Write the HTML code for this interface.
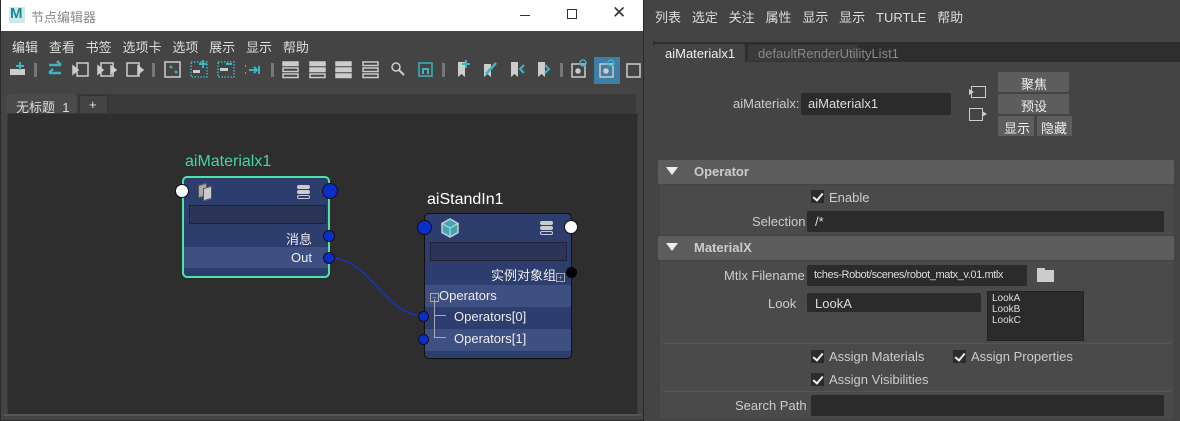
<!DOCTYPE html>
<html><head><meta charset="utf-8"><style>
*{margin:0;padding:0;box-sizing:border-box}
body{width:1180px;height:421px;overflow:hidden;background:#444;font-family:"Liberation Sans","Noto Sans CJK SC",sans-serif;font-size:13px;color:#ddd;position:relative}
.a{position:absolute}
.t{position:absolute;white-space:nowrap}
.ck{position:absolute;width:13px;height:13px;background:#2b2b2b}
.ck:after{content:"";position:absolute;left:4px;top:1px;width:4px;height:8px;border-right:2px solid #eee;border-bottom:2px solid #eee;transform:rotate(40deg)}
</style></head><body>
<!-- left window -->
<div class="a" style="left:0;top:0;width:644px;height:421px;background:#444;border:1px solid #2a2a2a"></div>
<div class="a" style="left:1px;top:0;width:642px;height:31px;background:#fff"></div>
<div class="a" style="left:9px;top:7px;width:16px;height:16px;background:#cde9ea"></div>
<div class="t" style="left:10px;top:5px;font:bold 15px 'Liberation Sans',sans-serif;color:#1a8a95">M</div>
<div class="t" style="left:31px;top:7px;font-size:13px;color:#888">节点编辑器</div>
<div class="a" style="left:520px;top:15px;width:10px;height:1px;background:#333"></div>
<div class="a" style="left:567px;top:9px;width:10px;height:10px;border:1px solid #333"></div>
<div class="t" style="left:612px;top:3px;font-size:17px;color:#333">✕</div>
<div class="t" style="left:12px;top:37px;color:#ddd">编辑&nbsp;&nbsp;&nbsp;查看&nbsp;&nbsp;&nbsp;书签&nbsp;&nbsp;&nbsp;选项卡&nbsp;&nbsp;&nbsp;选项&nbsp;&nbsp;&nbsp;展示&nbsp;&nbsp;&nbsp;显示&nbsp;&nbsp;&nbsp;帮助</div>
<!-- toolbar -->
<svg class="a" style="left:0;top:55px" width="645" height="32" viewBox="0 55 645 32">
<g fill="none" stroke="#ccc" stroke-width="1.5">
<rect x="10" y="69" width="15" height="6" fill="#ccc" stroke="none"/><path d="M20 62v8M16 66h8" stroke="#3cb4c4" stroke-width="2"/>
<path d="M49 65h12M57 61l4 4M61 73H49M53 69l-4 4" stroke="#3cb4c4" stroke-width="2.5"/>
<rect x="77" y="63" width="11" height="13"/><path d="M73 66l5 4-5 4z" fill="#ccc"/>
<rect x="101" y="63" width="12" height="13"/><path d="M98 66l5 4-5 4zM111 66l5 4-5 4z" fill="#ccc"/>
<rect x="127" y="63" width="12" height="13"/><path d="M138 66l5 4-5 4z" fill="#ccc"/>
<rect x="165" y="62" width="15" height="15"/><path d="M170 66l2 2M175 71l2 2" stroke="#3cb4c4" stroke-width="2.5"/>
<rect x="191" y="62" width="16" height="15" stroke="#3cb4c4" stroke-dasharray="1.5 1.5"/><path d="M203 60v8M199 64h8" stroke="#3cb4c4" stroke-width="2"/><rect x="193" y="70" width="7" height="3" fill="#ccc" stroke="none"/>
<rect x="218" y="62" width="16" height="15" stroke="#3cb4c4" stroke-dasharray="1.5 1.5"/><path d="M226 64h6" stroke="#3cb4c4" stroke-width="2"/><rect x="220" y="68" width="8" height="3" fill="#ccc" stroke="none"/>
<path d="M245 66h1M245 73h1M249 70h8M254 67l3 3-3 3M259 66v8" stroke="#3cb4c4" stroke-width="2"/>
<g stroke="#ccc"><rect x="283" y="62" width="15" height="3.5" fill="#ccc"/><rect x="283" y="68" width="15" height="3.5" fill="none"/><rect x="283" y="74" width="15" height="3.5" fill="none"/>
<rect x="310" y="62" width="15" height="3.5" fill="#ccc"/><rect x="310" y="68" width="15" height="3.5" fill="#ccc"/><rect x="310" y="74" width="15" height="3.5" fill="none"/>
<rect x="336" y="62" width="15" height="3.5" fill="#ccc"/><rect x="336" y="68" width="15" height="3.5" fill="#ccc"/><rect x="336" y="74" width="15" height="3.5" fill="#ccc"/>
<rect x="363" y="62" width="15" height="3.5"/><rect x="363" y="68" width="15" height="3.5"/><rect x="363" y="74" width="15" height="3.5"/></g>
<circle cx="396" cy="67" r="4"/><path d="M399 70l5 5" stroke-width="2"/>
<rect x="419" y="63" width="13" height="13" stroke="#3cb4c4"/><path d="M423 74v-5h5v5" stroke="#3cb4c4" stroke-width="2"/>
<path d="M458 62h7v15l-3.5-3-3.5 3z" fill="#ccc" stroke="none"/><path d="M466 60v8M462 64h8" stroke="#3cb4c4" stroke-width="2"/>
<path d="M484 64h7v13l-3.5-3-3.5 3z" fill="#ccc" stroke="none"/><path d="M486 74l10-11" stroke="#3cb4c4" stroke-width="2.5"/>
<path d="M511 62h7v15l-3.5-3-3.5 3z" fill="#ccc" stroke="none"/><path d="M524 65l-4 4 4 4" stroke="#3cb4c4" stroke-width="2"/>
<path d="M538 62h7v15l-3.5-3-3.5 3z" fill="#ccc" stroke="none"/><path d="M545 65l4 4-4 4" stroke="#3cb4c4" stroke-width="2"/>
<rect x="572" y="64" width="13" height="13"/><circle cx="583" cy="63" r="3" stroke="#3cb4c4"/><circle cx="578" cy="71" r="2" fill="#ccc"/>
<rect x="594" y="57" width="26" height="27" fill="#3f7ea6" stroke="none"/><rect x="600" y="64" width="13" height="13"/><circle cx="611" cy="63" r="3" stroke="#3cb4c4"/><circle cx="606" cy="71" r="2" fill="#ccc"/>
<rect x="627" y="64" width="13" height="13"/>
</g>
<g fill="#777"><rect x="34" y="63" width="3" height="14"/><rect x="152" y="63" width="3" height="14"/><rect x="271" y="63" width="3" height="14"/><rect x="442" y="63" width="3" height="14"/><rect x="560" y="63" width="3" height="14"/></g>
</svg>
<!-- tabs -->
<div class="a" style="left:6px;top:94px;width:630px;height:20px;background:#3a3a3a"></div>
<div class="a" style="left:6px;top:94px;width:71px;height:20px;background:#4a4a4a;border-radius:3px 3px 0 0"></div>
<div class="t" style="left:16px;top:97px;color:#ddd">无标题_1</div>
<div class="a" style="left:79px;top:95px;width:29px;height:19px;background:#444;border:1px solid #333;border-radius:3px 3px 0 0"></div>
<div class="t" style="left:89px;top:97px;color:#ddd">+</div>
<!-- canvas -->
<div class="a" style="left:7px;top:113px;width:631px;height:302px;background:#2e2e2e;border:1px solid #3a3a3a"></div>
<div class="a" style="left:4px;top:414px;width:637px;height:2px;background:#555"></div>
<!-- wire -->
<svg class="a" style="left:0;top:0" width="645" height="421"><path d="M330 258C370 258 385 316 424 316" stroke="#1d2fbf" stroke-width="1.5" fill="none"/></svg>
<!-- node1 -->
<div class="t" style="left:185px;top:153px;font-size:16px;color:#46d6a0">aiMaterialx1</div>
<div class="a" style="left:182px;top:176px;width:148px;height:102px;background:#2d3e6e;border:2px solid #4fe3a3;border-radius:5px;overflow:hidden">
<div class="a" style="left:5px;top:27px;width:137px;height:19px;background:#2c3558;border:1px solid #223"></div>
<div class="a" style="left:0;top:69px;width:146px;height:21px;background:#3e4f82"></div>
<div class="t" style="right:16px;top:51px;color:#eee">消息</div>
<div class="t" style="right:16px;top:72px;color:#eee">Out</div>
<div class="a" style="right:18px;top:7px;width:13px;height:4px;background:#ccc;border-radius:2px"></div>
<div class="a" style="right:18px;top:12px;width:13px;height:4px;background:#ccc;border-radius:2px"></div>
<div class="a" style="right:18px;top:17px;width:13px;height:4px;border:1px solid #ccc;border-radius:2px"></div>
<div class="a" style="left:14px;top:6px;width:9px;height:13px;background:#aaa;border:1px solid #555;transform:skewY(-15deg)"></div>
<div class="a" style="left:19px;top:9px;width:9px;height:13px;background:#ccc;border:1px solid #555;transform:skewY(-15deg)"></div>
</div>
<div class="a" style="left:175px;top:184px;width:14px;height:14px;border-radius:50%;background:#fff;border:1px solid #111"></div>
<div class="a" style="left:322px;top:183px;width:16px;height:16px;border-radius:50%;background:#0b2dcc;border:1.5px solid #111"></div>
<div class="a" style="left:323px;top:230px;width:12px;height:12px;border-radius:50%;background:#0b2dcc;border:1.5px solid #111"></div>
<div class="a" style="left:323px;top:252px;width:12px;height:12px;border-radius:50%;background:#0b2dcc;border:1.5px solid #111"></div>
<!-- node2 -->
<div class="t" style="left:427px;top:191px;font-size:16px;color:#fff">aiStandIn1</div>
<div class="a" style="left:424px;top:213px;width:148px;height:146px;background:#2d3e6e;border:1.5px solid #111;border-radius:5px;overflow:hidden">
<div class="a" style="left:5px;top:28px;width:137px;height:19px;background:#2c3558;border:1px solid #223"></div>
<div class="a" style="left:0;top:71px;width:146px;height:22px;background:#3e4f82"></div>
<div class="a" style="left:0;top:115px;width:146px;height:22px;background:#3e4f82"></div>
<div class="t" style="right:6px;top:51px;color:#eee">实例对象组<span style="display:inline-block;width:9px;height:9px;border:1px solid #aaa;font-size:8px;line-height:7px;text-align:center;color:#aaa">+</span></div>
<div class="t" style="left:5px;top:74px;color:#eee"><span style="display:inline-block;width:9px;height:9px;border:1px solid #aaa;font-size:8px;line-height:7px;text-align:center;color:#aaa">−</span>Operators</div>
<div class="a" style="left:9px;top:85px;width:1px;height:38px;background:#aaa"></div>
<div class="a" style="left:9px;top:101px;width:12px;height:1px;background:#aaa"></div>
<div class="a" style="left:9px;top:123px;width:12px;height:1px;background:#aaa"></div>
<div class="t" style="left:29px;top:95px;color:#eee">Operators[0]</div>
<div class="t" style="left:29px;top:117px;color:#eee">Operators[1]</div>
<div class="a" style="right:18px;top:7px;width:13px;height:4px;background:#ccc;border-radius:2px"></div>
<div class="a" style="right:18px;top:12px;width:13px;height:4px;background:#ccc;border-radius:2px"></div>
<div class="a" style="right:18px;top:17px;width:13px;height:4px;border:1px solid #ccc;border-radius:2px"></div>
<svg class="a" style="left:15px;top:4px" width="20" height="20"><path d="M10 1l8 4.5v9L10 19l-8-4.5v-9z" fill="#3aa8b8" stroke="#ccc" stroke-width="1.5"/><path d="M2 5.5L10 10l8-4.5M10 10v9" stroke="#ccc" stroke-width="1.2" fill="none"/></svg>
</div>
<div class="a" style="left:417px;top:220px;width:15px;height:15px;border-radius:50%;background:#0b2dcc;border:1.5px solid #111"></div>
<div class="a" style="left:564px;top:220px;width:14px;height:14px;border-radius:50%;background:#fff;border:1px solid #111"></div>
<div class="a" style="left:566px;top:267px;width:11px;height:11px;border-radius:50%;background:#000"></div>
<div class="a" style="left:418px;top:311px;width:11px;height:11px;border-radius:50%;background:#0b2dcc;border:1px solid #111"></div>
<div class="a" style="left:418px;top:334px;width:11px;height:11px;border-radius:50%;background:#0b2dcc;border:1px solid #111"></div>

<!-- right panel -->
<div class="a" style="left:645px;top:0;width:535px;height:421px;background:#444"></div>
<div class="t" style="left:655px;top:7px;color:#ddd">列表&nbsp;&nbsp;&nbsp;选定&nbsp;&nbsp;&nbsp;关注&nbsp;&nbsp;&nbsp;属性&nbsp;&nbsp;&nbsp;显示&nbsp;&nbsp;&nbsp;显示&nbsp;&nbsp;&nbsp;TURTLE&nbsp;&nbsp;&nbsp;帮助</div>
<div class="a" style="left:653px;top:42px;width:527px;height:20px;background:#2e2e2e"></div>
<div class="a" style="left:653px;top:44px;width:92px;height:18px;background:#444;border-radius:3px 3px 0 0"></div>
<div class="t" style="left:665px;top:46px;color:#eee">aiMaterialx1</div>
<div class="a" style="left:747px;top:44px;width:112px;height:18px;background:#3a3a3a;border:1px solid #333;border-radius:3px 3px 0 0"></div>
<div class="t" style="left:758px;top:46px;color:#888">defaultRenderUtilityList1</div>
<div class="a" style="left:653px;top:62px;width:527px;height:359px;background:#444"></div>
<div class="t" style="left:733px;top:96px;color:#ccc">aiMaterialx:</div>
<div class="a" style="left:801px;top:93px;width:150px;height:22px;background:#2b2b2b;border-radius:2px"></div>
<div class="t" style="left:808px;top:96px;color:#ddd">aiMaterialx1</div>
<div class="a" style="left:971px;top:86px;width:15px;height:12px;border:1px solid #ccc"></div><div class="a" style="left:969px;top:89px;border-left:5px solid #ccc;border-top:3px solid transparent;border-bottom:3px solid transparent"></div>
<div class="a" style="left:969px;top:108px;width:14px;height:13px;border:1px solid #ccc"></div><div class="a" style="left:982px;top:111px;border-left:5px solid #ccc;border-top:3px solid transparent;border-bottom:3px solid transparent"></div>
<div class="a" style="left:998px;top:72px;width:71px;height:20px;background:#5d5d5d"></div><div class="t" style="left:1021px;top:74px;color:#eee">聚焦</div>
<div class="a" style="left:998px;top:94px;width:71px;height:20px;background:#5d5d5d"></div><div class="t" style="left:1021px;top:96px;color:#eee">预设</div>
<div class="a" style="left:998px;top:116px;width:36px;height:20px;background:#5d5d5d"></div><div class="t" style="left:1004px;top:118px;color:#eee">显示</div>
<div class="a" style="left:1037px;top:116px;width:35px;height:20px;background:#5d5d5d"></div><div class="t" style="left:1041px;top:118px;color:#eee">隐藏</div>
<!-- section operator -->
<div class="a" style="left:658px;top:160px;width:516px;height:24px;background:#5d5d5d;border-radius:2px"></div>
<div class="a" style="left:666px;top:167px;border-top:8px solid #eee;border-left:6px solid transparent;border-right:6px solid transparent"></div>
<div class="t" style="left:694px;top:164px;font-weight:bold;color:#ccc">Operator</div>
<div class="a" style="left:660px;top:185px;width:513px;height:50px;background:#4a4a4a"></div>
<div class="ck" style="left:811px;top:190px"></div>
<div class="t" style="left:829px;top:190px;color:#ccc">Enable</div>
<div class="t" style="left:752px;top:214px;color:#ccc">Selection</div>
<div class="a" style="left:807px;top:211px;width:357px;height:21px;background:#2b2b2b;border-radius:2px"></div>
<div class="t" style="left:815px;top:214px;color:#ddd">/*</div>
<!-- materialx -->
<div class="a" style="left:658px;top:236px;width:516px;height:24px;background:#5d5d5d;border-radius:2px"></div>
<div class="a" style="left:666px;top:243px;border-top:8px solid #eee;border-left:6px solid transparent;border-right:6px solid transparent"></div>
<div class="t" style="left:694px;top:240px;font-weight:bold;color:#ccc">MaterialX</div>
<div class="a" style="left:660px;top:261px;width:513px;height:157px;background:#4a4a4a"></div>
<div class="a" style="left:662px;top:343px;width:509px;height:1px;background:#555"></div>
<div class="a" style="left:662px;top:391px;width:509px;height:1px;background:#555"></div>
<div class="t" style="left:724px;top:268px;color:#ccc">Mtlx Filename</div>
<div class="a" style="left:807px;top:265px;width:220px;height:21px;background:#2b2b2b;border-radius:2px"></div>
<div class="t" style="left:814px;top:269px;color:#ddd;font-size:11px;letter-spacing:-0.4px">tches-Robot/scenes/robot_matx_v.01.mtlx</div>
<div class="a" style="left:1037px;top:270px;width:17px;height:12px;background:#ccc"></div><div class="a" style="left:1037px;top:268px;width:8px;height:3px;background:#ccc"></div>
<div class="t" style="left:768px;top:296px;color:#ccc">Look</div>
<div class="a" style="left:807px;top:293px;width:174px;height:19px;background:#2b2b2b;border-radius:2px"></div>
<div class="t" style="left:815px;top:296px;color:#ddd">LookA</div>
<div class="a" style="left:987px;top:291px;width:97px;height:50px;background:#2b2b2b;border:1px solid #222"></div>
<div class="t" style="left:992px;top:293px;color:#ddd;font-size:10px;line-height:11px">LookA<br>LookB<br>LookC</div>
<div class="ck" style="left:811px;top:350px"></div>
<div class="t" style="left:829px;top:349px;color:#ccc">Assign Materials</div>
<div class="ck" style="left:953px;top:350px"></div>
<div class="t" style="left:971px;top:349px;color:#ccc">Assign Properties</div>
<div class="ck" style="left:811px;top:373px"></div>
<div class="t" style="left:829px;top:372px;color:#ccc">Assign Visibilities</div>
<div class="t" style="left:735px;top:398px;color:#ccc">Search Path</div>
<div class="a" style="left:811px;top:395px;width:353px;height:21px;background:#2b2b2b;border-radius:2px"></div>
</body></html>
